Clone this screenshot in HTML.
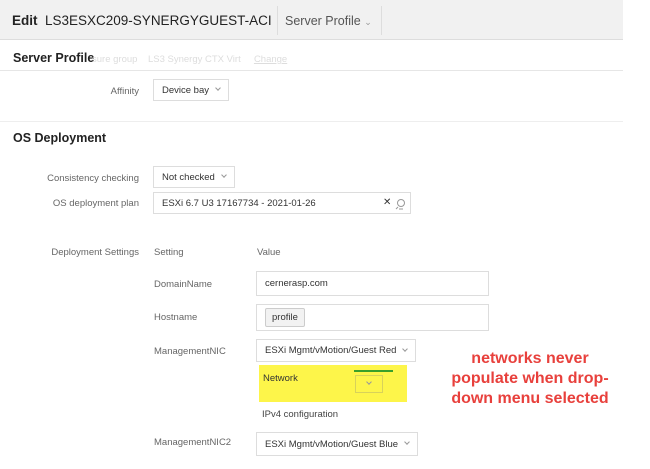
<!DOCTYPE html>
<html><head><meta charset="utf-8"><style>
*{box-sizing:border-box;margin:0;padding:0}
body{width:650px;height:469px;background:#fff;font-family:"Liberation Sans",sans-serif;position:relative;overflow:hidden;color:#333}
.a{position:absolute;white-space:nowrap}
.lbl{font-size:9.5px;color:#666}
.box{position:absolute;border:1px solid #ddd;background:#fff;font-size:9.5px;color:#333;padding-left:8px;display:flex;align-items:center}
.car{position:absolute;right:8px;top:50%;margin-top:-4px;width:4px;height:4px;border-right:1px solid #999;border-bottom:1px solid #999;transform:rotate(45deg)}
</style></head><body>
<div class="a" style="left:0;top:0;width:623px;height:40px;background:#f1f1f1;border-bottom:1px solid #ddd"></div>
<div class="a" style="left:12px;top:13px;font-size:13.5px;color:#222"><b>Edit</b>&nbsp; LS3ESXC209-SYNERGYGUEST-ACI</div>
<div class="a" style="left:277px;top:6px;width:1px;height:29px;background:#ddd"></div>
<div class="a" style="left:285px;top:14px;font-size:12.5px;color:#555">Server Profile <span style="font-size:9px;color:#999">⌄</span></div>
<div class="a" style="left:381px;top:6px;width:1px;height:29px;background:#ddd"></div>
<div class="a" style="left:13px;top:51px;font-size:12.5px;font-weight:bold;color:#222">Server Profile</div>
<div class="a" style="left:92px;top:54px;font-size:9.5px;color:#ddd">sure group&nbsp;&nbsp;&nbsp;&nbsp;LS3 Synergy CTX Virt&nbsp;&nbsp;&nbsp;&nbsp;&nbsp;<u>Change</u></div>
<div class="a" style="left:0;top:70px;width:623px;height:1px;background:#e6e6e6"></div>
<div class="a lbl" style="right:511px;top:86px">Affinity</div>
<div class="box" style="left:153px;top:79px;width:76px;height:22px">Device bay<span class="car"></span></div>
<div class="a" style="left:0;top:121px;width:623px;height:1px;background:#eee"></div>
<div class="a" style="left:13px;top:131px;font-size:12.5px;font-weight:bold;color:#222">OS Deployment</div>
<div class="a lbl" style="right:511px;top:173px">Consistency checking</div>
<div class="box" style="left:153px;top:166px;width:82px;height:22px">Not checked<span class="car"></span></div>
<div class="a lbl" style="right:511px;top:198px">OS deployment plan</div>
<div class="box" style="left:153px;top:192px;width:258px;height:22px">ESXi 6.7 U3 17167734 - 2021-01-26<span class="a" style="left:229px;top:4px;font-size:10px;color:#333">✕</span><svg class="a" style="left:241px;top:5px" width="11" height="12"><circle cx="6" cy="5" r="3.5" fill="none" stroke="#999"/><path d="M3 9 L1 11 M4 11h4" stroke="#999"/></svg></div>
<div class="a lbl" style="right:511px;top:247px">Deployment Settings</div>
<div class="a lbl" style="left:154px;top:247px">Setting</div>
<div class="a lbl" style="left:257px;top:247px">Value</div>
<div class="a lbl" style="left:154px;top:279px">DomainName</div>
<div class="box" style="left:256px;top:271px;width:233px;height:25px">cernerasp.com</div>
<div class="a lbl" style="left:154px;top:312px">Hostname</div>
<div class="box" style="left:256px;top:304px;width:233px;height:27px"><span style="border:1px solid #ccc;background:#f2f2f2;border-radius:2px;padding:3px 6px">profile</span></div>
<div class="a lbl" style="left:154px;top:346px">ManagementNIC</div>
<div class="box" style="left:256px;top:339px;width:160px;height:23px">ESXi Mgmt/vMotion/Guest Red<span class="car"></span></div>
<div class="a" style="left:259px;top:365px;width:148px;height:37px;background:#fdf54a"></div>
<div class="a" style="left:263px;top:373px;font-size:9.5px;color:#333">Network</div>
<div class="a" style="left:354px;top:370px;width:39px;height:2px;background:#3aa02a"></div>
<div class="a" style="left:355px;top:375px;width:28px;height:18px;border:1px solid #d8d25a"><span class="car" style="right:11px"></span></div>
<div class="a lbl" style="left:262px;top:409px;color:#444">IPv4 configuration</div>
<div class="a lbl" style="left:154px;top:437px">ManagementNIC2</div>
<div class="box" style="left:256px;top:432px;width:162px;height:24px">ESXi Mgmt/vMotion/Guest Blue<span class="car"></span></div>
<div class="a" style="left:440px;top:349px;width:180px;text-align:center;font-size:16px;font-weight:bold;color:#e8403c;line-height:20px">networks never<br>populate when drop-<br>down menu selected</div>
</body></html>
